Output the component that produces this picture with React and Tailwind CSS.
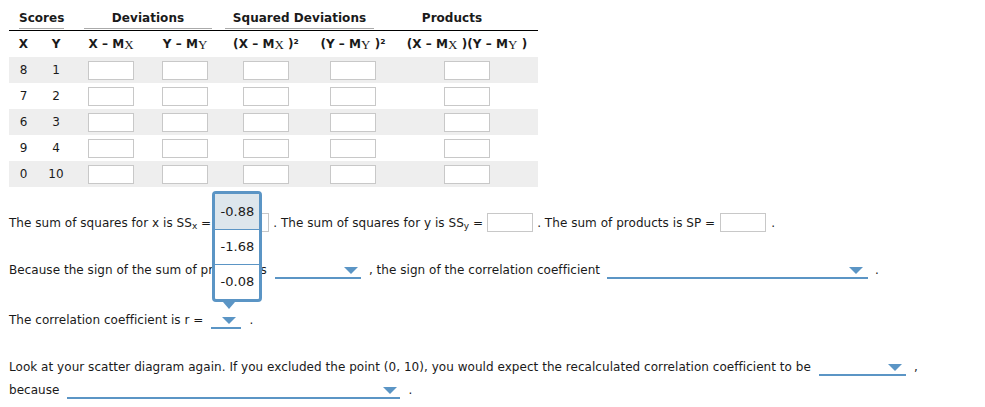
import React from 'react';

const BLUE = '#5b95c5';

const rows = [
  [8, 1],
  [7, 2],
  [6, 3],
  [9, 4],
  [0, 10],
];

// Subscript letter in the M_X / M_Y headers (math style, serif, not bold)
const Sub = ({ children }) => (
  <span className="font-['Liberation_Serif',serif] font-normal text-[13px] relative top-[1px]">{children}</span>
);

const Box = ({ className = '' }) => (
  <span className={`inline-block w-[46px] h-[19px] border border-[#c8c8c8] bg-white align-middle ${className}`} />
);

const Caret = () => (
  <svg width="14" height="7" viewBox="0 0 14 7" className="block">
    <path d="M0 0 H14 L7 7 Z" fill={BLUE} />
  </svg>
);

// Dropdown drawn as an underline with a caret on the right
const Drop = ({ w, pr = 4, mx = 'mx-[8px]', children }) => (
  <span
    className={`relative inline-flex justify-end items-start h-[18px] border-b-2 border-[#5b95c5] ${mx}`}
    style={{ width: w, paddingRight: pr }}
  >
    <span className="pt-[6px]">
      <Caret />
    </span>
    {children}
  </span>
);

// Open option list of the r dropdown
const Popup = () => (
  <div className="absolute left-[1px] bottom-[18px] w-[50px] z-10">
    <div className="border-[3px] border-[#5b95c5] rounded-[4px] bg-white overflow-hidden">
      {['-0.88', '-1.68', '-0.08'].map((v, i) => (
        <div
          key={v}
          className={`h-[35px] flex items-center pl-[5px] text-[13px] text-[#1a1a1a] ${i === 0 ? 'bg-[#dde6ec]' : ''} ${
            i > 0 ? 'border-t border-[#5b95c5]' : ''
          }`}
        >
          {v}
        </div>
      ))}
    </div>
    <svg width="12" height="7" viewBox="0 0 12 7" className="ml-[11px] block">
      <path d="M0 0 H12 L6 7 Z" fill={BLUE} />
    </svg>
  </div>
);

const App = () => {
  const cols = ['w-[29px]', 'w-[36px]', 'w-[74px]', 'w-[74px]', 'w-[88px]', 'w-[86px]', 'w-[142px]'];

  return (
    <div className="w-[985px] h-[407px] bg-white text-[#1a1a1a] text-[12px] tracking-[0.04px] font-['DejaVu_Sans',Verdana,sans-serif] overflow-hidden">
      {/* Group headings */}
      <div className="ml-[9px] w-[529px] pt-[11px] pb-[1px] border-b border-black flex font-bold leading-[14px]">
        <span className="ml-[10px] w-[45px] text-center pb-[3px] border-b border-[#aaa]">Scores</span>
        <span className="ml-[20px] w-[128px] text-center pb-[3px] border-b border-[#aaa]">Deviations</span>
        <span className="ml-[13px] w-[149px] text-center pb-[3px] border-b border-[#aaa]">Squared Deviations</span>
        <span className="ml-[26px] w-[104px] text-center pb-[3px]">Products</span>
      </div>

      {/* Column headings */}
      <div className="ml-[9px] w-[529px] h-[26px] flex items-center font-bold">
        <span className={`${cols[0]} text-center`}>X</span>
        <span className={`${cols[1]} text-center`}>Y</span>
        <span className={`${cols[2]} text-center`}>X – M<Sub>X</Sub></span>
        <span className={`${cols[3]} text-center`}>Y – M<Sub>Y</Sub></span>
        <span className={`${cols[4]} text-center`}>(X – M<Sub>X</Sub> )²</span>
        <span className={`${cols[5]} text-center`}>(Y – M<Sub>Y</Sub> )²</span>
        <span className={`${cols[6]} text-center`}>(X – M<Sub>X</Sub> )(Y – M<Sub>Y</Sub> )</span>
      </div>

      {/* Data rows */}
      {rows.map(([x, y], i) => (
        <div key={i} className={`ml-[9px] w-[529px] h-[26px] flex items-center ${i % 2 === 0 ? 'bg-[#eeeeee]' : ''}`}>
          <span className={`${cols[0]} text-center`}>{x}</span>
          <span className={`${cols[1]} text-center`}>{y}</span>
          {[2, 3, 4, 5, 6].map((c) => (
            <span key={c} className={`${cols[c]} flex justify-center`}>
              <Box />
            </span>
          ))}
        </div>
      ))}

      {/* Sums */}
      <div className="ml-[9px] mt-[26px] h-[19px] flex items-center whitespace-nowrap">
        <span>The sum of squares for x is SS<sub className="text-[9px]">x</sub> =</span>
        <Box className="ml-[12px] mr-[4px]" />
        <span>. The sum of squares for y is SS<sub className="text-[9px]">y</sub> =</span>
        <Box className="mx-[4px]" />
        <span>. The sum of products is SP =</span>
        <Box className="mx-[5px]" />
        <span>.</span>
      </div>

      <div className="ml-[9px] mt-[29px] h-[18px] flex items-center whitespace-nowrap">
        <span>Because the sign of the sum of products is</span>
        <Drop w={86} pr={3} />
        <span>, the sign of the correlation coefficient</span>
        <Drop w={261} pr={5} mx="mx-[7px]" />
        <span>.</span>
      </div>

      <div className="ml-[9px] mt-[32px] h-[18px] flex items-center whitespace-nowrap">
        <span>The correlation coefficient is r =</span>
        <Drop w={30} pr={5}>
          <Popup />
        </Drop>
        <span>.</span>
      </div>

      <div className="ml-[9px] mt-[29px] h-[18px] flex items-center whitespace-nowrap">
        <span>Look at your scatter diagram again. If you excluded the point (0, 10), you would expect the recalculated correlation coefficient to be</span>
        <Drop w={87} pr={4} />
        <span>,</span>
      </div>

      <div className="ml-[9px] mt-[5px] h-[18px] flex items-center whitespace-nowrap">
        <span>because</span>
        <Drop w={333} pr={3} />
        <span>.</span>
      </div>
    </div>
  );
};

export default App;
